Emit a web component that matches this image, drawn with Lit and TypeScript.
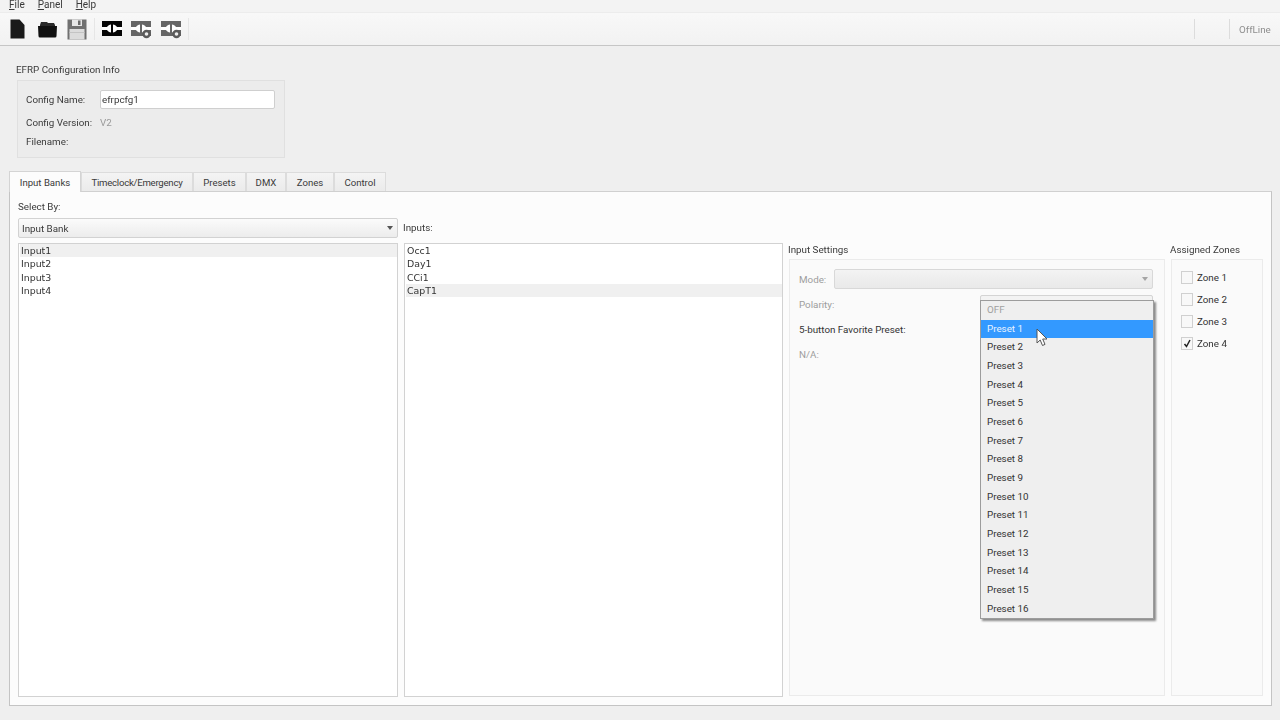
import { LitElement, html, css, svg } from 'lit';
import { customElement } from 'lit/decorators.js';

const presets = Array.from({ length: 16 }, (_, i) => `Preset ${i + 1}`);
const tabs = ['Input Banks', 'Timeclock/Emergency', 'Presets', 'DMX', 'Zones', 'Control'];
const zones = [
  { name: 'Zone 1', on: false },
  { name: 'Zone 2', on: false },
  { name: 'Zone 3', on: false },
  { name: 'Zone 4', on: true },
];

// connector icon used three times in the toolbar, the gray ones carry a small gear
const connector = (fill: string, gear: boolean) => svg`
  <svg width="22" height="20" viewBox="0 0 22 20">
    <rect x="1" y="2" width="20" height="15" fill=${fill}></rect>
    <path d="M1 8 H6 C7 6.5 8.5 5.5 10 5.5 V13.5 C8.5 13.5 7 12.5 6 11 H1Z M21 8 H16 C15 6.5 13.5 5.5 12 5.5 V13.5 C13.5 13.5 15 12.5 16 11 H21Z" fill="#fff"></path>
    ${gear
      ? svg`<circle cx="16.5" cy="15" r="4.2" fill="#5a5a5a"></circle><circle cx="16.5" cy="15" r="1.8" fill="#eee"></circle>`
      : ''}
  </svg>`;

@customElement('app-root')
export class AppRoot extends LitElement {
  static styles = css`
    :host {
      display: block;
      width: 1280px;
      height: 720px;
      overflow: hidden;
      background: #efefef;
      font-family: Roboto, 'Liberation Sans', Arial, sans-serif;
      font-size: 9.8px;
      color: #3a3a3a;
    }
    .window {
      height: 720px;
      display: flex;
      flex-direction: column;
      filter: blur(0.4px);
    }
    .menubar {
      height: 12px;
      background: #f3f3f3;
      display: flex;
      gap: 13px;
      padding-left: 9px;
      font-size: 10px;
      line-height: 9px;
      flex: none;
    }
    .menubar u { text-underline-offset: 1px; }
    .toolbar {
      height: 34px;
      box-sizing: border-box;
      flex: none;
      display: flex;
      align-items: center;
      background: linear-gradient(#f8f8f8, #f2f2f2);
      border-bottom: 1px solid #c6c6c6;
      border-top: 1px solid #ececec;
      padding-left: 3px;
    }
    .tool {
      width: 29.5px;
      height: 22px;
      display: flex;
      align-items: center;
      justify-content: center;
      flex: none;
    }
    .sep {
      width: 1px;
      height: 22px;
      background: #e6e6e6;
      margin: 0 2px 0 2.5px;
      flex: none;
    }
    .tool-space { flex: 1; }
    .status-sep { width: 1px; height: 20px; background: #dcdcdc; flex: none; }
    .status-gap { width: 34px; }
    .offline { width: 50px; padding: 1px 0 0 9px; color: #8e8e8e; box-sizing: border-box; }

    .info { padding: 18px 0 0 16px; flex: none; }
    .info-title { line-height: 12px; }
    .info-box {
      box-sizing: border-box;
      width: 268px;
      height: 78px;
      margin: 4px 0 0 1px;
      background: #ececec;
      border: 1px solid #e0e0e0;
      padding: 8px 9px 0 8px;
    }
    .info-row { display: flex; align-items: center; height: 20px; }
    .info-row.v { height: 26px; }
    .info-row.f { height: 13px; }
    .info-row label { width: 74px; flex: none; }
    .name-input {
      box-sizing: border-box;
      width: 175px;
      height: 19px;
      background: #fff;
      border: 1px solid #cfcfcf;
      border-radius: 2px;
      padding-left: 1px;
      line-height: 17px;
    }
    .muted { color: #9a9a9a; }

    .tabs { display: flex; margin: 13px 0 0 9px; height: 20px; flex: none; align-items: flex-end; position: relative; z-index: 1; }
    .tab {
      box-sizing: border-box;
      height: 19px;
      line-height: 19px;
      font-size: 9.6px;
      text-align: center;
      background: linear-gradient(#f4f4f4, #ebebeb);
      border: 1px solid #dcdcdc;
      border-bottom: none;
      white-space: nowrap;
    }
    .tab.long { letter-spacing: -0.25px; }
    .tab.active {
      height: 21px;
      line-height: 22px;
      background: #fcfcfc;
      border-color: #d4d4d4;
      margin-bottom: -1px;
    }
    .pane {
      box-sizing: border-box;
      width: 1263px;
      height: 515px;
      margin-left: 9px;
      background: #fcfcfc;
      border: 1px solid #c4c4c4;
      border-top-color: #d0d0d0;
      padding: 9px 8px 8px 8px;
      display: flex;
      flex: none;
    }
    .col { display: flex; flex-direction: column; flex: none; }
    .col1 { width: 380px; }
    .col2 { width: 380px; margin-left: 5px; padding-top: 21px; }
    .col3 { width: 377px; margin-left: 5px; padding-top: 43px; }
    .col4 { width: 93px; margin-left: 5px; padding-top: 43px; }
    .label { line-height: 12px; height: 12px; }
    .combo {
      box-sizing: border-box;
      height: 20px;
      border: 1px solid #d2d2d2;
      border-radius: 2px;
      background: linear-gradient(#fbfbfb, #ececec);
      display: flex;
      align-items: center;
      justify-content: space-between;
      padding: 0 4px 0 3px;
    }
    .combo i {
      width: 0;
      height: 0;
      border-left: 3.5px solid transparent;
      border-right: 3.5px solid transparent;
      border-top: 4px solid #555;
    }
    .combo.off { background: linear-gradient(#f3f3f3, #e9e9e9); border-color: #d8d8d8; }
    .combo.off i { border-top-color: #a5a5a5; }
    .select { margin: 5px 0; }
    .list {
      box-sizing: border-box;
      flex: 1;
      background: #fff;
      border: 1px solid #d2d2d2;
      padding: 0 0 1px 1px;
      font-family: 'DejaVu Sans', sans-serif;
      font-size: 9.4px;
      color: #333;
    }
    .list div { height: 13.3px; line-height: 13.3px; padding-left: 1px; }
    .list .cur { background: #f0f0f0; }
    .col2 .list { margin: 9px 0 0 1px; }
    .box {
      box-sizing: border-box;
      flex: 1;
      margin: 3px 0 1px 1px;
      background: #fafafa;
      border: 1px solid #ebebeb;
      position: relative;
    }
    .col3 .box { padding: 9px 11px 0 9px; }
    .row { display: flex; align-items: center; height: 25px; color: #9d9d9d; }
    .row.first { height: 20px; margin-bottom: 3px; }
    .row.first span { width: 35px; flex: none; }
    .row.first .combo { flex: 1; }
    .row.dark { color: #333; }
    .stub {
      box-sizing: border-box;
      width: 173px;
      height: 12px;
      margin: 3px 0 0 auto;
      align-self: flex-start;
      border: 1px solid #d4d4d4;
      border-radius: 2px;
      background: #f3f3f3;
    }
    .popup {
      position: absolute;
      left: 190px;
      top: 40px;
      width: 174px;
      box-sizing: border-box;
      background: #efefef;
      border: 1px solid #9c9c9c;
      box-shadow: 2px 2px 2px #8a8a8a;
      color: #333;
    }
    .popup div { height: 18.67px; line-height: 18.67px; padding-left: 6px; }
    .popup .dis { color: #a0a0a0; }
    .popup .hl { background: #3399ff; color: #e8f3ff; }
    .cursor { position: absolute; left: 246px; top: 68px; }
    .col4 .box { padding: 6px 0 0 9px; }
    .zone { display: flex; align-items: center; height: 22px; gap: 4px; color: #333; }
    .check {
      box-sizing: border-box;
      width: 12px;
      height: 13px;
      background: #f8f8f8;
      border: 1px solid #d0d0d0;
      display: flex;
      align-items: center;
      justify-content: center;
    }
  `;

  render() {
    return html`
      <div class="window">
        <div class="menubar">
          <span><u>F</u>ile</span><span><u>P</u>anel</span><span><u>H</u>elp</span>
        </div>
        <div class="toolbar">
          <div class="tool">
            <svg width="15" height="20" viewBox="0 0 15 20"><path d="M0.5 0.5 H9.5 L14.5 6 V19.5 H0.5Z" fill="#1a1a1a"></path></svg>
          </div>
          <div class="tool">
            <svg width="21" height="17" viewBox="0 0 21 17"><path d="M3 4 L4 1 H10 L11 2 H17 L18 4 V7 H3Z" fill="#2a2a2a"></path><path d="M1 5 H20 L19.5 15 Q19.5 16.5 18 16.5 H3 Q1.5 16.5 1.5 15Z" fill="#111"></path></svg>
          </div>
          <div class="tool">
            <svg width="20" height="21" viewBox="0 0 20 21"><rect x="0.5" y="0.5" width="19" height="20" fill="#707070"></rect><rect x="5" y="0.5" width="10" height="6.5" fill="#e6e6e6"></rect><rect x="11" y="1.5" width="2.5" height="4.5" fill="#6a6a6a"></rect><rect x="2.5" y="10" width="15" height="10.5" fill="#dcdcdc"></rect><rect x="2.5" y="13" width="15" height="1" fill="#c4c4c4"></rect></svg>
          </div>
          <div class="sep"></div>
          <div class="tool">${connector('#060606', false)}</div>
          <div class="tool">${connector('#666', true)}</div>
          <div class="tool">${connector('#666', true)}</div>
          <div class="sep"></div>
          <div class="tool-space"></div>
          <div class="status-sep"></div>
          <div class="status-gap"></div>
          <div class="status-sep"></div>
          <div class="offline">OffLine</div>
        </div>

        <div class="info">
          <div class="info-title">EFRP Configuration Info</div>
          <div class="info-box">
            <div class="info-row"><label>Config Name:</label><div class="name-input">efrpcfg1</div></div>
            <div class="info-row v"><label>Config Version:</label><span class="muted">V2</span></div>
            <div class="info-row f"><label>Filename:</label></div>
          </div>
        </div>

        <div class="tabs">
          ${tabs.map(
            (t, i) => html`<div
              class="tab ${i === 0 ? 'active' : ''} ${i === 1 ? 'long' : ''}"
              style="width:${[72, 112, 53, 40, 48, 52][i]}px"
            >${t}</div>`,
          )}
        </div>
        <div class="pane">
          <div class="col col1">
            <div class="label">Select By:</div>
            <div class="combo select"><span>Input Bank</span><i></i></div>
            <div class="list">
              <div class="cur">Input1</div><div>Input2</div><div>Input3</div><div>Input4</div>
            </div>
          </div>
          <div class="col col2">
            <div class="label">Inputs:</div>
            <div class="list">
              <div>Occ1</div><div>Day1</div><div>CCi1</div><div class="cur">CapT1</div>
            </div>
          </div>
          <div class="col col3">
            <div class="label">Input Settings</div>
            <div class="box">
              <div class="row first"><span>Mode:</span><div class="combo off"><span></span><i></i></div></div>
              <div class="row"><span>Polarity:</span><div class="stub"></div></div>
              <div class="row dark"><span>5-button Favorite Preset:</span></div>
              <div class="row"><span>N/A:</span></div>
              <div class="popup">
                <div class="dis">OFF</div>
                ${presets.map((p, i) => html`<div class=${i === 0 ? 'hl' : ''}>${p}</div>`)}
              </div>
              <svg class="cursor" width="13" height="19" viewBox="0 0 13 19">
                <path d="M1 1 V15 L4.2 12 L6.5 17.5 L9 16.4 L6.7 11 H11Z" fill="#fff" stroke="#555" stroke-width="1"></path>
              </svg>
            </div>
          </div>
          <div class="col col4">
            <div class="label">Assigned Zones</div>
            <div class="box">
              ${zones.map(
                (z) => html`<div class="zone">
                  <span class="check">
                    ${z.on
                      ? html`<svg width="9" height="9" viewBox="0 0 9 9"><path d="M1.5 5 L3.5 7.5 L7 1" fill="none" stroke="#222" stroke-width="1.5"></path></svg>`
                      : ''}
                  </span>
                  <span>${z.name}</span>
                </div>`,
              )}
            </div>
          </div>
        </div>
      </div>
    `;
  }
}
